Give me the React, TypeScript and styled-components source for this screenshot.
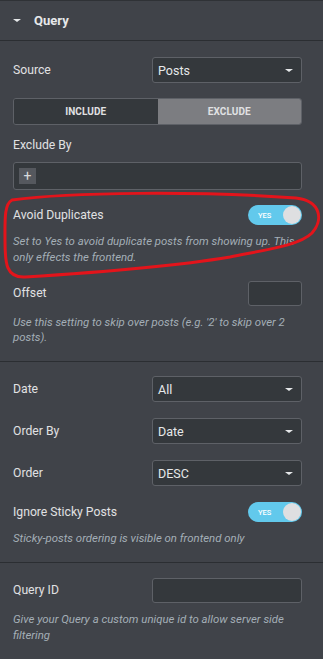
import React from "react";
import styled, { createGlobalStyle } from "styled-components";

const Global = createGlobalStyle`
  html, body { margin: 0; padding: 0; background: #404349; }
  body { font-family: Roboto, "Liberation Sans", sans-serif; -webkit-font-smoothing: antialiased; }
  * { box-sizing: border-box; }
`;

const Panel = styled.div`
  position: relative;
  width: 323px;
  min-height: 659px;
  background: #404349;
  border-top: 1px solid #2f3236;
  overflow: hidden;
`;

const Header = styled.div`
  height: 40px;
  display: flex;
  align-items: center;
  gap: 13px;
  padding: 0 13px;
  border-bottom: 1px solid #2b2e32;
  color: #e6e8ea;
  font-weight: 700;
  font-size: 13px;
`;

const Caret = styled.span<{ $size?: number }>`
  display: inline-block;
  width: 0;
  height: 0;
  border-left: ${(p) => p.$size ?? 4}px solid transparent;
  border-right: ${(p) => p.$size ?? 4}px solid transparent;
  border-top: ${(p) => (p.$size ?? 4) - 0.5}px solid #e6e8ea;
`;

const Section = styled.div<{ $pt: number; $pb: number; $border?: boolean }>`
  display: flex;
  flex-direction: column;
  padding: ${(p) => p.$pt}px 21px ${(p) => p.$pb}px 13px;
  border-bottom: ${(p) => (p.$border ? "1px solid #2b2e32" : "none")};
`;

const Row = styled.div<{ $mt?: number; $h?: number }>`
  display: flex;
  align-items: center;
  justify-content: space-between;
  margin-top: ${(p) => p.$mt ?? 0}px;
  height: ${(p) => p.$h ?? 26}px;
`;

const Label = styled.div<{ $mt?: number }>`
  color: #e0e1e3;
  font-size: 12.2px;
  line-height: 15px;
  margin-top: ${(p) => p.$mt ?? 0}px;
`;

const Desc = styled.div<{ $mt?: number }>`
  color: #a4afb7;
  font-size: 11.4px;
  font-style: italic;
  line-height: 15.8px;
  margin-top: ${(p) => p.$mt ?? 0}px;
`;

const SelectBox = styled.div<{ $w?: number }>`
  width: ${(p) => p.$w ?? 150}px;
  height: 26px;
  background: #34383c;
  border: 1px solid #5e6167;
  border-radius: 3px;
  display: flex;
  align-items: center;
  justify-content: space-between;
  padding: 0 8px 0 5px;
  color: #e6e8ea;
  font-size: 12.5px;
`;

const TextBox = styled.div<{ $w: number; $h?: number; $mt?: number }>`
  width: ${(p) => p.$w}px;
  height: ${(p) => p.$h ?? 25}px;
  margin-top: ${(p) => p.$mt ?? 0}px;
  background: #34383c;
  border: 1px solid #5e6167;
  border-radius: 3px;
  display: flex;
  align-items: center;
  padding: 0 5px;
`;

const PlusBox = styled.div`
  width: 17px;
  height: 16px;
  background: #55585e;
  color: #d8dadc;
  font-size: 14px;
  line-height: 16px;
  text-align: center;
`;

const Choices = styled.div`
  margin-top: 15px;
  height: 27px;
  display: grid;
  grid-template-columns: 1fr 1fr;
  border: 1px solid #5e6167;
  border-radius: 3px;
  overflow: hidden;
`;

const Choice = styled.div<{ $active?: boolean }>`
  display: flex;
  align-items: center;
  justify-content: center;
  background: ${(p) => (p.$active ? "#7c7d81" : "#34383c")};
  color: #e0e1e3;
  font-size: 10px;
  font-weight: 700;
  letter-spacing: 0.1px;
`;

const Switch = styled.div`
  width: 54px;
  height: 20px;
  border-radius: 10px;
  background: #62c9ec;
  display: flex;
  align-items: center;
  justify-content: space-between;
  padding: 0 1px 0 10px;
`;

const SwitchText = styled.span`
  color: #ffffff;
  font-size: 7.5px;
  font-weight: 500;
`;

const Knob = styled.span`
  width: 18px;
  height: 18px;
  border-radius: 50%;
  background: #dedfe1;
`;

const Annotation = styled.svg`
  position: absolute;
  left: 0;
  top: 0;
  pointer-events: none;
`;

function Select({ value }: { value: string }) {
  return (
    <SelectBox>
      <span>{value}</span>
      <Caret $size={4} />
    </SelectBox>
  );
}

export default function App() {
  return (
    <>
      <Global />
      <Panel>
        <Header>
          <Caret $size={4} />
          <span>Query</span>
        </Header>
        <Section $pt={16} $pb={15} $border>
          <Row>
            <Label>Source</Label>
            <Select value="Posts" />
          </Row>
          <Choices>
            <Choice>INCLUDE</Choice>
            <Choice $active>EXCLUDE</Choice>
          </Choices>
          <Label $mt={13}>Exclude By</Label>
          <TextBox $w={289} $h={28} $mt={9}>
            <PlusBox>+</PlusBox>
          </TextBox>
          <Row $mt={15} $h={20}>
            <Label>Avoid Duplicates</Label>
            <Switch>
              <SwitchText>YES</SwitchText>
              <Knob />
            </Switch>
          </Row>
          <Desc $mt={9}>
            Set to Yes to avoid duplicate posts from showing up. This only effects the frontend.
          </Desc>
          <Row $mt={15} $h={25}>
            <Label>Offset</Label>
            <TextBox $w={54} />
          </Row>
          <Desc $mt={9}>Use this setting to skip over posts (e.g. '2' to skip over 2 posts).</Desc>
        </Section>
        <Section $pt={14} $pb={15} $border>
          <Row>
            <Label>Date</Label>
            <Select value="All" />
          </Row>
          <Row $mt={16}>
            <Label>Order By</Label>
            <Select value="Date" />
          </Row>
          <Row $mt={16}>
            <Label>Order</Label>
            <Select value="DESC" />
          </Row>
          <Row $mt={16} $h={20}>
            <Label>Ignore Sticky Posts</Label>
            <Switch>
              <SwitchText>YES</SwitchText>
              <Knob />
            </Switch>
          </Row>
          <Desc $mt={9}>Sticky-posts ordering is visible on frontend only</Desc>
        </Section>
        <Section $pt={15} $pb={15}>
          <Row $h={25}>
            <Label>Query ID</Label>
            <TextBox $w={150} />
          </Row>
          <Desc $mt={9}>Give your Query a custom unique id to allow server side filtering</Desc>
        </Section>
        <Annotation width="323" height="659" viewBox="0 0 323 659">
          <path
            d="M 12 199 C 70 191, 200 190, 296 197 C 322 200, 323 220, 312 232 C 300 244, 270 248, 230 256 C 170 266, 90 272, 25 276 C 6 277, 5 262, 5 240 C 5 220, 4 203, 12 199"
            fill="none"
            stroke="#e3141b"
            strokeWidth="3"
            strokeLinecap="round"
          />
        </Annotation>
      </Panel>
    </>
  );
}
